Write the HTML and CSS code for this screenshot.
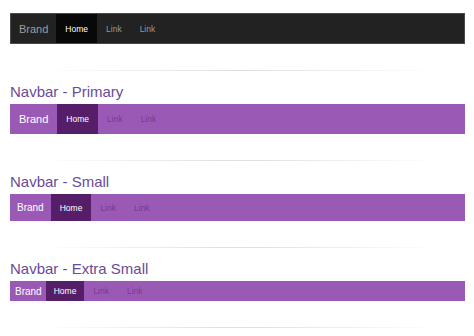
FILE: index.html
```html
<!DOCTYPE html>
<html lang="en">
<head>
    <meta charset="UTF-8">
    <meta name="viewport" content="width=device-width, initial-scale=1.0">
    <title>Navbars</title>
    <link rel="stylesheet" href="styles.css">
</head>
<body>

<div class="navbar inverse">
    <a class="brand">Brand</a>
    <a class="item active">Home</a>
    <a class="item">Link</a>
    <a class="item">Link</a>
</div>

<hr class="divider">

<h2>Navbar - Primary</h2>
<div class="navbar primary">
    <a class="brand">Brand</a>
    <a class="item active">Home</a>
    <a class="item">Link</a>
    <a class="item">Link</a>
</div>

<hr class="divider">

<h2>Navbar - Small</h2>
<div class="navbar primary small">
    <a class="brand">Brand</a>
    <a class="item active">Home</a>
    <a class="item">Link</a>
    <a class="item">Link</a>
</div>

<hr class="divider">

<h2>Navbar - Extra Small</h2>
<div class="navbar primary xsmall">
    <a class="brand">Brand</a>
    <a class="item active">Home</a>
    <a class="item">Link</a>
    <a class="item">Link</a>
</div>

<hr class="divider">

</body>
</html>
```

FILE: styles.css
```css
html,
body {
    margin: 0;
    background: #fff;
    font-family: "Liberation Sans", Arial, sans-serif;
}

body {
    padding: 13px 9px 0 10px;
}

h2 {
    margin: 12px 0 3px;
    font-size: 15px;
    line-height: 18px;
    font-weight: normal;
    color: #684c97;
}

/* gradient divider */
.divider {
    border: 0;
    height: 1px;
    width: 400px;
    margin: 26px 0 0 30px;
    background: linear-gradient(to right, rgba(0, 0, 0, 0), rgba(0, 0, 0, 0.13), rgba(0, 0, 0, 0));
}

.navbar {
    display: flex;
    align-items: stretch;
    height: 30px;
    box-sizing: border-box;
}

.navbar a {
    display: flex;
    align-items: center;
    padding: 0 9px;
    font-size: 8.5px;
}

.navbar .brand {
    font-size: 11px;
}

/* dark */
.inverse {
    height: 31px;
    background: #222;
    border: 1px solid #4a4a4a;
}
.inverse .brand {
    padding: 0 8px;
    color: #9d9d9d;
}
.inverse .item {
    color: #999;
}
.inverse .active {
    background: #080808;
    color: #fff;
}

/* purple */
.primary {
    background: #9b59b6;
}
.primary .brand {
    color: #fff;
}
.primary .item {
    color: #773a90;
}
.primary .active {
    background: #561e69;
    color: #fff;
}

.small {
    height: 27px;
}
.small .brand {
    padding: 0 7px;
    font-size: 10px;
}

.xsmall {
    height: 20px;
}
.xsmall .brand {
    padding: 0 4px 0 5px;
    font-size: 10px;
}
.xsmall .active {
    padding: 0 8px;
}
```
